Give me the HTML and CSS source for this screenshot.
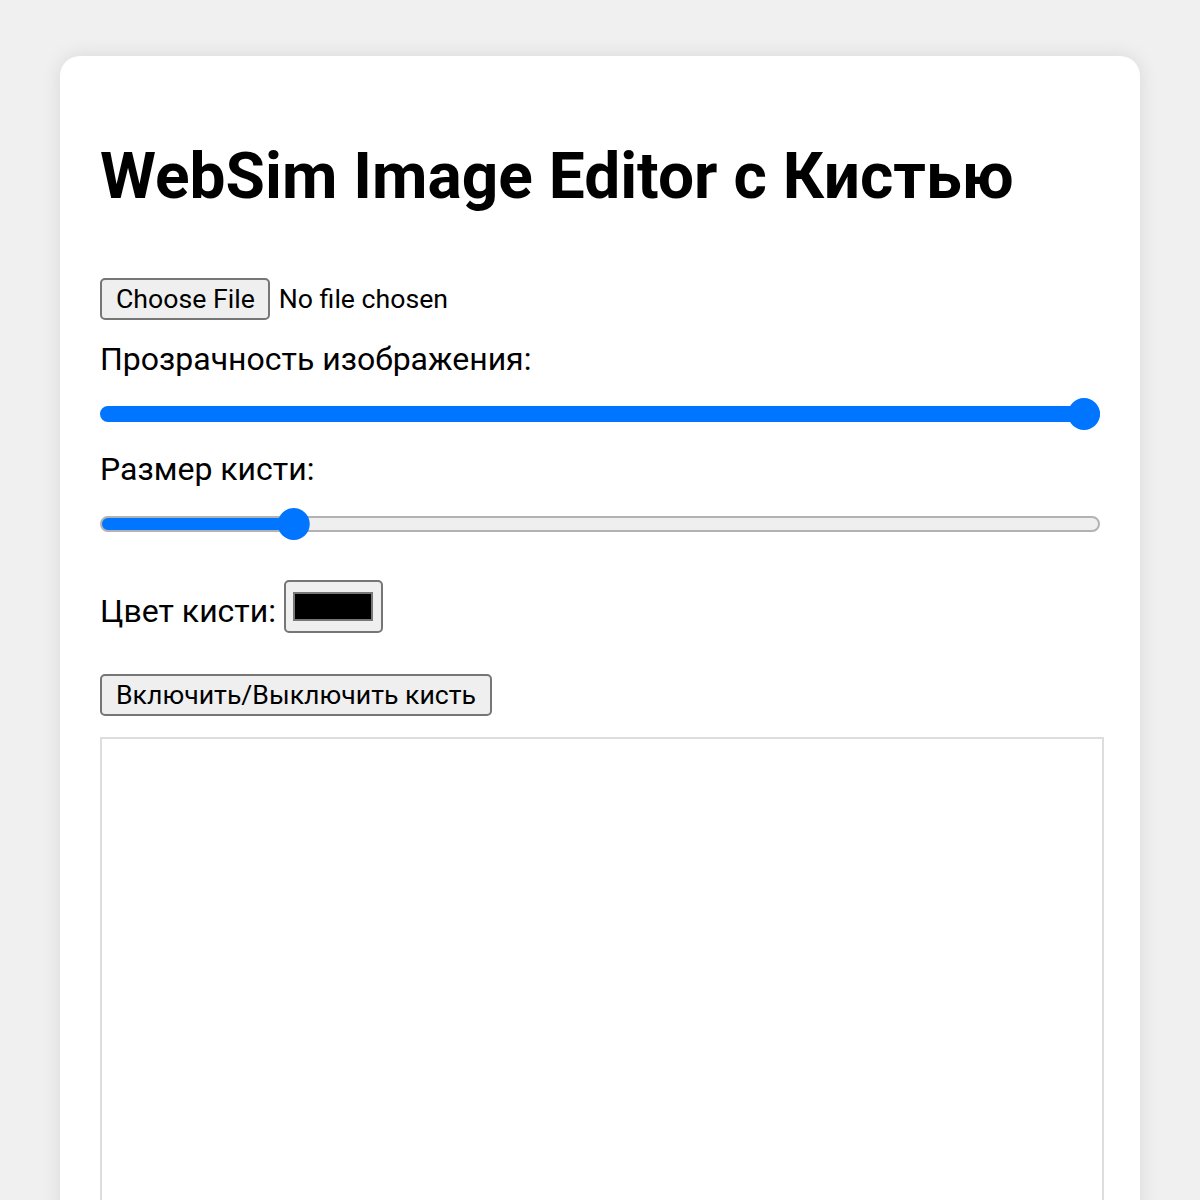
FILE: index.html
```html
<!DOCTYPE html>
<html lang="ru">
<head>
<meta charset="utf-8">
<title>WebSim Image Editor с Кистью</title>
<link rel="stylesheet" href="styles.css">
</head>
<body>
  <main class="card">
    <h1 class="title">WebSim Image Editor с Кистью</h1>

    <div class="file-row">
      <label class="btn file-btn">Choose File<input type="file" class="file-input" accept="image/*"></label>
      <span class="file-name">No file chosen</span>
    </div>

    <label class="field-label" for="opacity">Прозрачность изображения:</label>
    <input id="opacity" class="slider is-full" type="range" min="0" max="1" step="0.01" value="1" style="--p: 1">

    <label class="field-label" for="brush-size">Размер кисти:</label>
    <input id="brush-size" class="slider" type="range" min="1" max="50" value="10" style="--p: 0.1837">

    <div class="color-row">
      <label class="field-label inline" for="brush-color">Цвет кисти:</label>
      <span class="color-well"><span class="color-swatch"></span></span>
    </div>

    <button class="btn toggle-btn" type="button">Включить/Выключить кисть</button>

    <canvas class="board" width="1000" height="800"></canvas>
  </main>
</body>
</html>
```

FILE: styles.css
```css
* {
  box-sizing: border-box;
}

html,
body {
  margin: 0;
  padding: 0;
}

body {
  background: #f0f0f0;
  font-family: Roboto, "Liberation Sans", Arial, sans-serif;
  color: #000;
  padding: 56px 60px 0;
}

.card {
  background: #fff;
  border-radius: 20px;
  box-shadow: 0 0 20px rgba(0, 0, 0, 0.1);
  padding: 40px 40px 40px;
}

.title {
  font-size: 64px;
  font-weight: 700;
  line-height: 75px;
  margin: 43px 0 64px;
}

.btn {
  display: inline-flex;
  align-items: center;
  height: 42px;
  padding: 0 14px;
  background: #efefef;
  border: 2px solid #767676;
  border-radius: 5px;
  font-family: inherit;
  font-size: 26.67px;
  color: #000;
  cursor: pointer;
}

.file-btn {
  padding: 0 13px 0 14px;
}

.file-row {
  display: flex;
  align-items: center;
  gap: 9px;
  height: 42px;
}

.file-input {
  display: none;
}

.file-name {
  font-size: 26.67px;
}

.field-label {
  display: block;
  font-size: 32px;
  line-height: 38px;
  margin-top: 20px;
}

.field-label.inline {
  display: inline-block;
  margin-top: 8px;
}

/* Range slider: grey track, blue fill up to the thumb */
.slider {
  -webkit-appearance: none;
  appearance: none;
  display: block;
  width: 100%;
  height: 32px;
  margin: 20px 0 0;
  padding: 0;
  background: transparent;
  --fill: calc(16px + (100% - 32px) * var(--p));
  --edge: #b2b2b2;
}

.slider.is-full {
  --edge: #0075ff;
}

.slider::-webkit-slider-runnable-track {
  height: 16px;
  border: 2px solid var(--edge);
  border-radius: 8px;
  background:
    linear-gradient(to right, #0075ff var(--fill), transparent var(--fill)) border-box,
    linear-gradient(#efefef, #efefef) padding-box;
}

/* the thumb travels inside the track border; nudge it so it spans the full width */
.slider::-webkit-slider-thumb {
  -webkit-appearance: none;
  appearance: none;
  width: 32px;
  height: 32px;
  margin-top: -10px;
  border: none;
  border-radius: 50%;
  background: #0075ff;
  transform: translateX(calc((var(--p) * 2 - 1) * 2px));
}

.color-row {
  display: flex;
  align-items: center;
  gap: 8px;
  height: 53px;
  margin-top: 40px;
}

.color-well {
  display: flex;
  align-items: center;
  justify-content: center;
  width: 99px;
  height: 53px;
  background: #efefef;
  border: 2px solid #767676;
  border-radius: 5px;
}

.color-swatch {
  width: 80px;
  height: 29px;
  background: #000;
  border: 2px solid #777;
}

.toggle-btn {
  margin-top: 41px;
}

.board {
  display: block;
  width: 1004px;
  height: 800px;
  margin-top: 21px;
  border: 2px solid #ddd;
  background: #fff;
}
```
